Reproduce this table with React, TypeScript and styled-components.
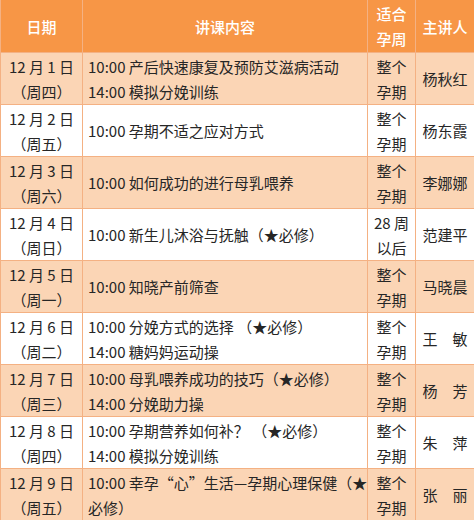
import React from "react";
import styled, { createGlobalStyle } from "styled-components";

const GlobalStyle = createGlobalStyle`
    html, body {
        margin: 0;
        padding: 0;
        background: #ffffff;
    }
`;

const Table = styled.table`
    width: 474px;
    table-layout: fixed;
    border-collapse: collapse;
    font-family: "Noto Sans CJK SC", "DejaVu Sans", sans-serif;
    font-size: 15px;
    color: #262626;
`;

const HeadCell = styled.th`
    height: 52px;
    padding: 0;
    background-color: #f79646;
    color: #ffffff;
    font-weight: 500;
    font-size: 15px;
    line-height: 25px;
    text-align: center;
    border: 1px solid #f4b183;
    border-top: none;
`;

const Row = styled.tr<{ $shaded: boolean }>`
    height: 52px;
    background-color: ${(p) => (p.$shaded ? "#fbd5b5" : "#ffffff")};
`;

const Cell = styled.td<{ $align?: "left" | "center" }>`
    padding: ${(p) => (p.$align === "left" ? "0 0 0 5px" : "0")};
    text-align: ${(p) => p.$align ?? "center"};
    vertical-align: middle;
    line-height: 25px;
    border: 1px solid #f4b183;
    overflow: hidden;
`;

const Line = styled.div<{ $tight?: boolean }>`
    display: block;
    white-space: nowrap;
    letter-spacing: ${(p) => (p.$tight ? "-0.4px" : "0")};
`;

type Lesson = {
    day: number;
    week: string;
    topics: string[];
    term: [string, string];
    teacher: string;
};

const lessons: Lesson[] = [
    { day: 1, week: "周四", topics: ["10:00 产后快速康复及预防艾滋病活动", "14:00 模拟分娩训练"], term: ["整个", "孕期"], teacher: "杨秋红" },
    { day: 2, week: "周五", topics: ["10:00 孕期不适之应对方式"], term: ["整个", "孕期"], teacher: "杨东霞" },
    { day: 3, week: "周六", topics: ["10:00 如何成功的进行母乳喂养"], term: ["整个", "孕期"], teacher: "李娜娜" },
    { day: 4, week: "周日", topics: ["10:00 新生儿沐浴与抚触（★必修）"], term: ["28 周", "以后"], teacher: "范建平" },
    { day: 5, week: "周一", topics: ["10:00 知晓产前筛查"], term: ["整个", "孕期"], teacher: "马晓晨" },
    { day: 6, week: "周二", topics: ["10:00 分娩方式的选择 （★必修）", "14:00 糖妈妈运动操"], term: ["整个", "孕期"], teacher: "王　敏" },
    { day: 7, week: "周三", topics: ["10:00 母乳喂养成功的技巧（★必修）", "14:00 分娩助力操"], term: ["整个", "孕期"], teacher: "杨　芳" },
    { day: 8, week: "周四", topics: ["10:00 孕期营养如何补？ （★必修）", "14:00 模拟分娩训练"], term: ["整个", "孕期"], teacher: "朱　萍" },
    { day: 9, week: "周五", topics: ["10:00 幸孕“心”生活—孕期心理保健（★", "必修）"], term: ["整个", "孕期"], teacher: "张　丽" },
];

export default function App() {
    return (
        <>
            <GlobalStyle />
            <Table>
                <colgroup>
                    <col style={{ width: 82 }} />
                    <col style={{ width: 285 }} />
                    <col style={{ width: 48 }} />
                    <col style={{ width: 59 }} />
                </colgroup>
                <thead>
                    <tr>
                        <HeadCell>日期</HeadCell>
                        <HeadCell>讲课内容</HeadCell>
                        <HeadCell>
                            <Line>适合</Line>
                            <Line>孕周</Line>
                        </HeadCell>
                        <HeadCell>主讲人</HeadCell>
                    </tr>
                </thead>
                <tbody>
                    {lessons.map((l, i) => (
                        <Row key={l.day} $shaded={i % 2 === 0}>
                            <Cell>
                                <Line>12 月 {l.day} 日</Line>
                                <Line>（{l.week}）</Line>
                            </Cell>
                            <Cell $align="left">
                                {l.topics.map((t) => (
                                    <Line key={t} $tight={t.length > 24}>
                                        {t}
                                    </Line>
                                ))}
                            </Cell>
                            <Cell>
                                <Line>{l.term[0]}</Line>
                                <Line>{l.term[1]}</Line>
                            </Cell>
                            <Cell>{l.teacher}</Cell>
                        </Row>
                    ))}
                </tbody>
            </Table>
        </>
    );
}
